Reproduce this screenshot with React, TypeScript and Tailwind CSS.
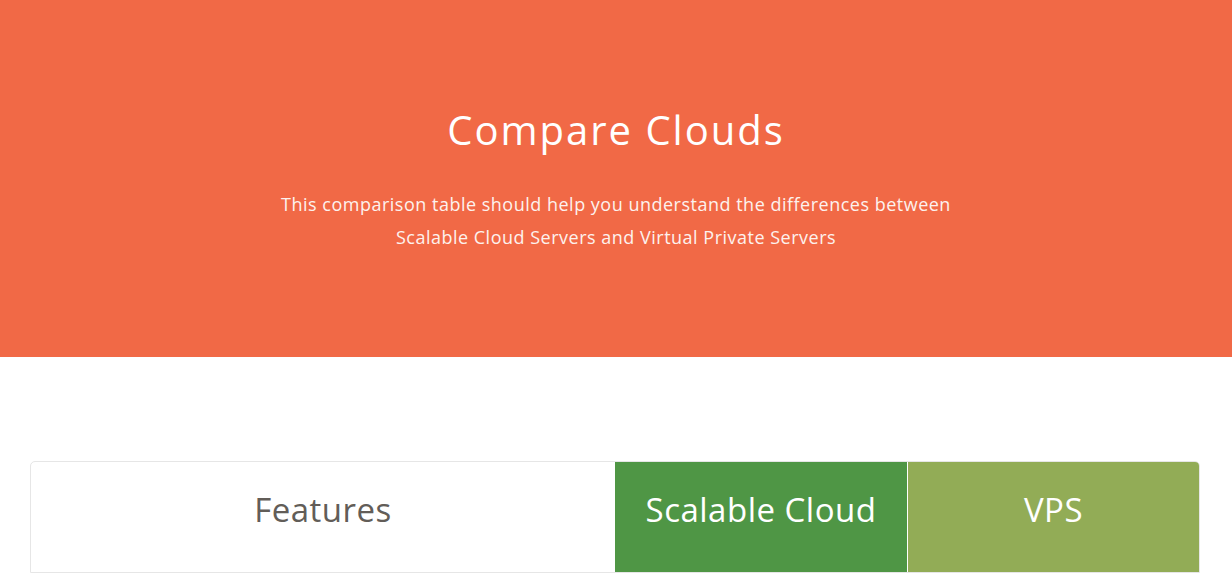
export default function App() {
  return (
    <div className="min-h-screen bg-white font-['Open_Sans',sans-serif]">
      <header className="flex h-[357px] flex-col items-center bg-[#f16946] pt-[106px] text-center text-white">
        <h1 className="text-[40px] leading-[48px] font-normal tracking-[2px]">Compare Clouds</h1>
        <p className="mt-[34px] text-[18px] leading-[33px] tracking-[0.5px] text-[#fdf2ee]">
          This comparison table should help you understand the differences between
          <br />
          Scalable Cloud Servers and Virtual Private Servers
        </p>
      </header>

      <section className="pt-[104px]">
        <div className="mx-auto w-[1170px] -translate-x-px">
          <div className="grid grid-cols-[2fr_1fr_1fr] overflow-hidden rounded-t-[5px] border border-[#e6e6e6] text-[33px] tracking-[0.5px]">
            <div className="flex h-[110px] items-center justify-center pb-[14px] text-[#625d58]">Features</div>
            <div className="flex h-[110px] items-center justify-center bg-[#4f9645] pb-[14px] text-white">
              Scalable Cloud
            </div>
            <div className="flex h-[110px] items-center justify-center border-l border-white bg-[#92ac56] pb-[14px] text-white">
              VPS
            </div>
          </div>
        </div>
      </section>
    </div>
  );
}
